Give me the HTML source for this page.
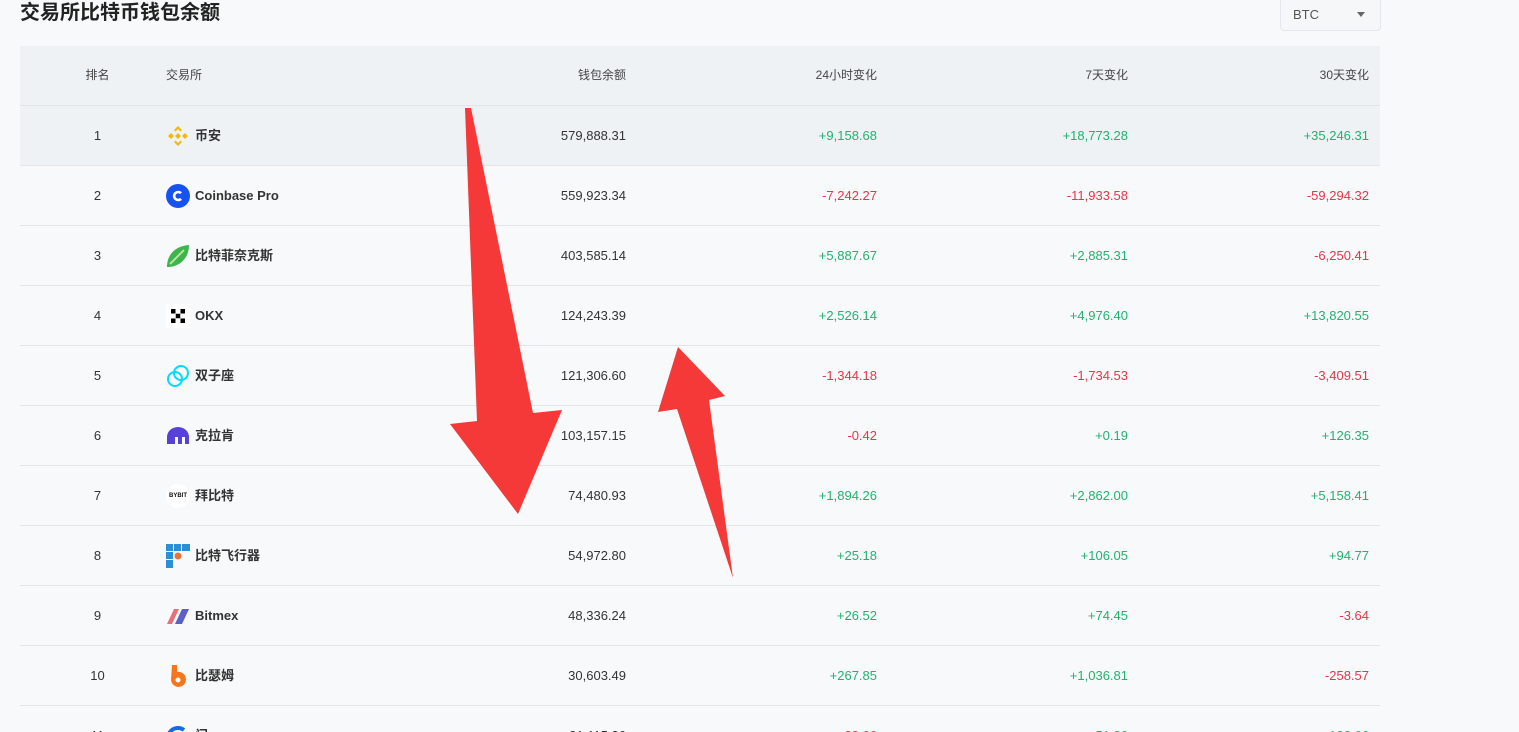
<!DOCTYPE html>
<html><head><meta charset="utf-8"><style>
html,body{margin:0;width:1519px;height:732px;overflow:hidden}
body{background:#f8f9fa;font-family:"Liberation Sans","Noto Sans CJK SC",sans-serif;position:relative;color:#333}
h1{position:absolute;left:20px;top:0;margin:0;font-size:20px;font-weight:bold;color:#222;line-height:26px}
.sel{position:absolute;left:1280px;top:-5px;width:99px;height:34px;border:1px solid #e3e6ea;border-radius:4px;background:#f5f7f9;font-size:13px;color:#555}
.sel span{position:absolute;left:12px;top:11px}
.sel i{position:absolute;left:76px;top:16px;border:4px solid transparent;border-top:5px solid #666;border-bottom:0}
.hd{position:absolute;left:20px;top:46px;width:1360px;height:59px;background:#eef2f5;border-bottom:1px solid #e2e5e8}
.row{position:absolute;left:20px;width:1360px;height:59px;border-bottom:1px solid #e3e5e7}
.c{position:absolute;top:0;line-height:59px;font-size:13px;white-space:nowrap}
.hd .c{font-size:12px;color:#444}
.rk{left:62px;width:31px;text-align:center}
.ex{left:146px;font-weight:bold;color:#333;display:flex;align-items:center;height:59px}
.ex b{display:flex;align-items:center;justify-content:center;width:24px;height:24px;margin-right:5px;border-radius:50%;flex:none;line-height:24px;overflow:hidden}
.ex b svg{display:block}
.bal{right:754px;text-align:right}
.d1{right:503px}.d7{right:252px}.d30{right:11px}
.g{color:#21b26f}.r{color:#e5364a}
</style></head><body>
<h1>交易所比特币钱包余额</h1>
<div class="sel"><span>BTC</span><i></i></div>
<div class="hd"><div class="c rk">排名</div><div class="c ex" style="font-weight:normal;color:#444;font-size:12px">交易所</div><div class="c bal">钱包余额</div><div class="c d1">24小时变化</div><div class="c d7">7天变化</div><div class="c d30">30天变化</div></div>

<div class="row" style="top:106px;background:#eef2f5"><div class="c rk">1</div><div class="c ex"><b style="border-radius:0"><svg width="24" height="24" viewBox="0 0 24 24"><g fill="#f0b90b"><path d="M12 2l4 4-1.5 1.5L12 5 9.5 7.5 8 6z"/><path d="M12 22l4-4-1.5-1.5L12 19l-2.5-2.5L8 18z"/><path d="M2 12l3-3 3 3-3 3z"/><path d="M16 12l3-3 3 3-3 3z"/><path d="M12 9l3 3-3 3-3-3z"/></g></svg></b>币安</div><div class="c bal">579,888.31</div><div class="c d1 g">+9,158.68</div><div class="c d7 g">+18,773.28</div><div class="c d30 g">+35,246.31</div></div>
<div class="row" style="top:166px"><div class="c rk">2</div><div class="c ex"><b style="background:#1652f0"><svg width="24" height="24"><path d="M15 9.2a4 4 0 1 0 0 5.6" stroke="#fff" stroke-width="2.6" fill="none"/></svg></b>Coinbase Pro</div><div class="c bal">559,923.34</div><div class="c d1 r">-7,242.27</div><div class="c d7 r">-11,933.58</div><div class="c d30 r">-59,294.32</div></div>
<div class="row" style="top:226px"><div class="c rk">3</div><div class="c ex"><b style="border-radius:0"><svg width="24" height="24"><path d="M1 23C1 10 10 2 23 1C23 14 14 23 1 23z" fill="#3cb54a"/><path d="M4 20L18 6" stroke="#b7e3a0" stroke-width="2"/></svg></b>比特菲奈克斯</div><div class="c bal">403,585.14</div><div class="c d1 g">+5,887.67</div><div class="c d7 g">+2,885.31</div><div class="c d30 r">-6,250.41</div></div>
<div class="row" style="top:286px"><div class="c rk">4</div><div class="c ex"><b style="border-radius:0;background:#fff"><svg width="24" height="24"><g fill="#000"><rect x="5" y="5" width="4.5" height="4.5"/><rect x="14.5" y="5" width="4.5" height="4.5"/><rect x="9.75" y="9.75" width="4.5" height="4.5"/><rect x="5" y="14.5" width="4.5" height="4.5"/><rect x="14.5" y="14.5" width="4.5" height="4.5"/></g></svg></b>OKX</div><div class="c bal">124,243.39</div><div class="c d1 g">+2,526.14</div><div class="c d7 g">+4,976.40</div><div class="c d30 g">+13,820.55</div></div>
<div class="row" style="top:346px"><div class="c rk">5</div><div class="c ex"><b style="border-radius:0"><svg width="24" height="24"><g fill="none" stroke="#00dcfa" stroke-width="2"><circle cx="9" cy="15" r="7"/><circle cx="15" cy="9" r="7"/></g></svg></b>双子座</div><div class="c bal">121,306.60</div><div class="c d1 r">-1,344.18</div><div class="c d7 r">-1,734.53</div><div class="c d30 r">-3,409.51</div></div>
<div class="row" style="top:406px"><div class="c rk">6</div><div class="c ex"><b style="border-radius:0"><svg width="24" height="24"><path d="M1 20V13a11 10 0 0 1 22 0v7h-4v-7h-3v7h-4v-7h-3v7z" fill="#5741d9"/></svg></b>克拉肯</div><div class="c bal">103,157.15</div><div class="c d1 r">-0.42</div><div class="c d7 g">+0.19</div><div class="c d30 g">+126.35</div></div>
<div class="row" style="top:466px"><div class="c rk">7</div><div class="c ex"><b style="background:#fff;font-size:6px;color:#111">BYBIT</b>拜比特</div><div class="c bal">74,480.93</div><div class="c d1 g">+1,894.26</div><div class="c d7 g">+2,862.00</div><div class="c d30 g">+5,158.41</div></div>
<div class="row" style="top:526px"><div class="c rk">8</div><div class="c ex"><b style="border-radius:0"><svg width="24" height="24"><g fill="#2a8fd6"><rect x="0" y="0" width="7" height="7"/><rect x="8" y="0" width="7" height="7"/><rect x="16" y="0" width="8" height="7"/><rect x="0" y="8" width="7" height="7"/><rect x="0" y="16" width="7" height="8"/></g><circle cx="12" cy="12" r="3.5" fill="#e8743b"/></svg></b>比特飞行器</div><div class="c bal">54,972.80</div><div class="c d1 g">+25.18</div><div class="c d7 g">+106.05</div><div class="c d30 g">+94.77</div></div>
<div class="row" style="top:586px"><div class="c rk">9</div><div class="c ex"><b style="border-radius:0"><svg width="24" height="24"><path d="M1 20L8 5h5L6 20z" fill="#e4707a"/><path d="M9 20L16 5h7L16 20z" fill="#5b5fc7"/></svg></b>Bitmex</div><div class="c bal">48,336.24</div><div class="c d1 g">+26.52</div><div class="c d7 g">+74.45</div><div class="c d30 r">-3.64</div></div>
<div class="row" style="top:646px"><div class="c rk">10</div><div class="c ex"><b style="border-radius:0"><svg width="24" height="24"><path d="M6 1h5v7a7.5 7.5 0 1 1-6 8z" fill="#f7751b"/><circle cx="12" cy="16" r="2.5" fill="#fff"/></svg></b>比瑟姆</div><div class="c bal">30,603.49</div><div class="c d1 g">+267.85</div><div class="c d7 g">+1,036.81</div><div class="c d30 r">-258.57</div></div>
<div class="row" style="top:706px"><div class="c rk">11</div><div class="c ex"><b style="border-radius:0"><svg width="24" height="24"><path d="M4 20a10 10 0 0 1 14-14" stroke="#1a6ae0" stroke-width="4" fill="none"/></svg></b>门</div><div class="c bal">21,115.26</div><div class="c d1 r">-23.66</div><div class="c d7 g">+51.36</div><div class="c d30 g">+133.66</div></div>

<svg style="position:absolute;left:0;top:0" width="1519" height="732">
<polygon fill="#f53838" points="465,108 471,108 533,413 562,410 518,514 450,424 477,421"/>
<polygon fill="#f53838" points="678,347 725,396 709,400 733,578 677,409 658,412"/>
</svg>
</body></html>
